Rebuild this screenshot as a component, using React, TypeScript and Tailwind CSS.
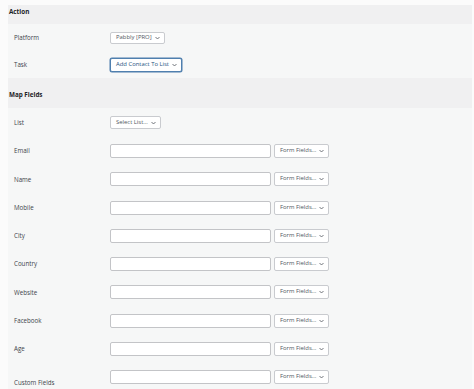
import React from 'react';

const FONT = { fontFamily: '"Open Sans", "Noto Sans", sans-serif' };

const Chevron = () => (
  <svg width="5" height="4" viewBox="0 0 10 7" className="shrink-0">
    <path d="M1 1.5 L5 5.5 L9 1.5" fill="none" stroke="#50575e" strokeWidth="1.6" />
  </svg>
);

interface SelectProps {
  label: string;
  focused?: boolean;
  height?: string;
}

const FakeSelect: React.FC<SelectProps> = ({ label, focused, height = 'h-[13px]' }) => (
  <div
    className={`${height} inline-flex items-center gap-[3px] whitespace-nowrap bg-white rounded-[2px] pl-[5px] pr-[4px] text-[5.9px] leading-none ${
      focused
        ? 'border border-[#4f7fae] text-[#1e5180] shadow-[0_0_0_0.5px_#4f7fae]'
        : 'border border-[#c9cbcf] text-[#50575e]'
    }`}
  >
    <span>{label}</span>
    <Chevron />
  </div>
);

const mapFields = ['Email', 'Name', 'Mobile', 'City', 'Country', 'Website', 'Facebook', 'Age', 'Custom Fields'];

export default function App() {
  return (
    <div className="w-[474px] h-[389px] overflow-hidden bg-[#fbfbfb]" style={FONT}>
      <div className="ml-[8px] mr-[2px] pt-[5px]">
        {/* Action */}
        <div className="h-[19px] bg-[#f0f0f1] pl-[1px] pt-[2px] text-[6.3px] font-bold text-[#1d2327]">
          Action
        </div>
        <div className="bg-[#f6f7f7] pt-[8px] pb-[6px] flex flex-col gap-[14px]">
          <div className="flex items-center h-[12px]">
            <div className="w-[102px] pl-[6px] text-[6.2px] text-[#3c434a]">Platform</div>
            <FakeSelect label="Pabbly [PRO]" height="h-[12px]" />
          </div>
          <div className="flex items-center h-[14px]">
            <div className="w-[102px] pl-[6px] text-[6.2px] text-[#3c434a]">Task</div>
            <FakeSelect label="Add Contact To List" height="h-[14px]" focused />
          </div>
        </div>

        {/* Map Fields */}
        <div className="h-[30px] bg-[#f0f0f1] pl-[1px] flex items-center pt-[4px] text-[6.3px] font-bold text-[#1d2327]">
          Map Fields
        </div>
        <div className="bg-[#f6f7f7] pt-[8px] h-[300px]">
          <div className="flex items-center h-[13px]">
            <div className="w-[102px] pl-[6px] text-[6.2px] text-[#3c434a]">List</div>
            <FakeSelect label="Select List..." />
          </div>
          <div className="mt-[15px] flex flex-col gap-[14.25px]">
            {mapFields.map((field, i) => (
              <div key={field} className="flex items-center h-[14px]">
                <div
                  className={`w-[102px] pl-[6px] text-[6.2px] text-[#3c434a] ${
                    i === mapFields.length - 1 ? 'pt-[12px]' : ''
                  }`}
                >
                  {field}
                </div>
                <div className="w-[161px] h-[14px] bg-white border border-[#c3c4c7] rounded-[2px]" />
                <div className="ml-[3px] flex">
                  <FakeSelect label="Form Fields..." height="h-[14px]" />
                </div>
              </div>
            ))}
          </div>
        </div>
      </div>
    </div>
  );
}
